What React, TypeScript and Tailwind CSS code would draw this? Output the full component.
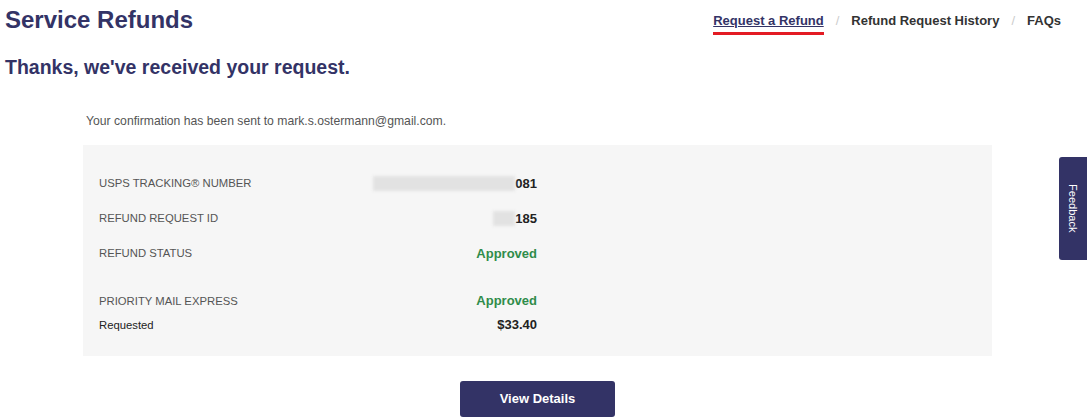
import React from "react";

const rows = [
  { label: "USPS TRACKING® NUMBER", value: "081", blur: 142 },
  { label: "REFUND REQUEST ID", value: "185", blur: 22 },
];

export default function App() {
  return (
    <div className="relative w-[1087px] h-[420px] overflow-hidden bg-white font-['Liberation_Sans',Arial,sans-serif]">
      <div className="flex items-start justify-between pl-[5px] pr-[26px] pt-[6px]">
        <h1 className="text-[24px] leading-[28px] font-bold text-[#333366]">Service Refunds</h1>
        <nav className="flex items-center gap-[12px] pt-[7px] text-[13px] font-bold text-[#333333]">
          <div className="flex flex-col">
            <a className="text-[#333366] underline leading-[16px]">Request a Refund</a>
            <span className="mt-[3px] h-[3px] bg-[#e31b23]" />
          </div>
          <span className="text-[#cccccc] font-normal -mt-[6px]">/</span>
          <a className="leading-[16px] -mt-[6px]">Refund Request History</a>
          <span className="text-[#cccccc] font-normal -mt-[6px]">/</span>
          <a className="leading-[16px] -mt-[6px]">FAQs</a>
        </nav>
      </div>

      <h2 className="pl-[5px] mt-[20px] text-[19.5px] leading-[24px] font-bold text-[#333366]">
        Thanks, we've received your request.
      </h2>

      <div className="ml-[83px] w-[909px] mt-[35px] flex flex-col">
        <p className="pl-[3px] text-[12.2px] leading-[14px] text-[#555555]">
          Your confirmation has been sent to mark.s.ostermann@gmail.com.
        </p>

        <div className="mt-[17px] bg-[#f6f6f6] pt-[21px] pb-[19px] pl-[16px]">
          <div className="w-[438px] flex flex-col">
            {rows.map((r) => (
              <div key={r.label} className="h-[35px] flex items-center justify-between">
                <span className="text-[11.3px] text-[#555555]">{r.label}</span>
                <span className="flex items-center">
                  <span
                    className="h-[15px] bg-[#e2e2e2] blur-[1.5px]"
                    style={{ width: r.blur }}
                  />
                  <span className="text-[13px] font-bold text-[#222222]">{r.value}</span>
                </span>
              </div>
            ))}
            <div className="h-[35px] flex items-center justify-between">
              <span className="text-[11.3px] text-[#555555]">REFUND STATUS</span>
              <span className="text-[13px] font-bold text-[#2f8c4a]">Approved</span>
            </div>
            <div className="mt-[18px] h-[24px] flex items-center justify-between">
              <span className="text-[11.3px] text-[#555555]">PRIORITY MAIL EXPRESS</span>
              <span className="text-[13px] font-bold text-[#2f8c4a]">Approved</span>
            </div>
            <div className="h-[24px] flex items-center justify-between">
              <span className="text-[11.3px] text-[#222222]">Requested</span>
              <span className="text-[13px] font-bold text-[#222222]">$33.40</span>
            </div>
          </div>
        </div>

        <button className="self-center mt-[25px] w-[155px] h-[36px] rounded-[3px] bg-[#333366] text-white text-[13px] font-bold">
          View Details
        </button>
      </div>

      <div className="absolute right-0 top-[157px] w-[28px] h-[103px] rounded-l-[3px] bg-[#333366] flex items-center justify-center">
        <span className="rotate-90 text-white text-[11px] whitespace-nowrap">Feedback</span>
      </div>
    </div>
  );
}
